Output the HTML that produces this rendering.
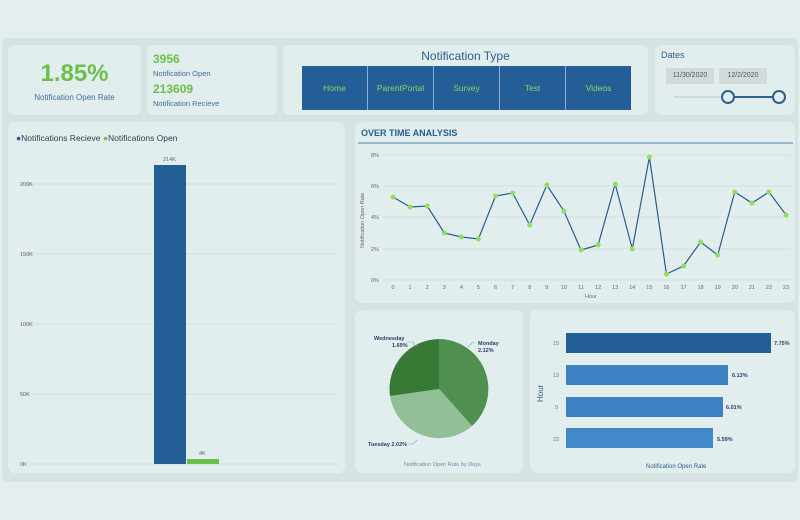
<!DOCTYPE html><html><head><style>
body{margin:0;width:800px;height:520px;background:#e4eeee;font-family:"Liberation Sans",sans-serif;position:relative;overflow:hidden}
.bg{position:absolute;left:2px;top:38px;width:796px;height:444px;background:#d6e3e3;border-radius:6px}
.c{position:absolute;background:#e2eded;border-radius:7px}
.t{position:absolute;white-space:nowrap}
</style></head><body>
<div class="bg"></div>
<div class="c" style="left:8px;top:45px;width:133px;height:70px"></div>
<div class="t" style="left:8px;width:133px;text-align:center;top:60px;font-size:24px;font-weight:bold;color:#6cbf4a">1.85%</div>
<div class="t" style="left:8px;width:133px;text-align:center;top:93px;font-size:8px;color:#3f6f9e">Notification Open Rate</div>
<div class="c" style="left:147px;top:45px;width:130px;height:70px"></div>
<div class="t" style="left:153px;top:52px;font-size:12px;font-weight:bold;color:#6cbf4a">3956</div>
<div class="t" style="left:153px;top:69px;font-size:7.5px;color:#3f6f9e">Notification Open</div>
<div class="t" style="left:153px;top:82px;font-size:12px;font-weight:bold;color:#6cbf4a">213609</div>
<div class="t" style="left:153px;top:99px;font-size:7.5px;color:#3f6f9e">Notification Recieve</div>
<div class="c" style="left:283px;top:45px;width:365px;height:70px"></div>
<div class="t" style="left:283px;width:365px;text-align:center;top:49px;font-size:12px;color:#2f5f8e">Notification Type</div>
<div style="position:absolute;left:302px;top:66px;width:329px;height:44px;background:#235f96;display:flex">
<div style="flex:1;border-right:1px solid #8fb0cc;color:#8fd15e;font-size:8.5px;display:flex;align-items:center;justify-content:center">Home</div>
<div style="flex:1;border-right:1px solid #8fb0cc;color:#8fd15e;font-size:8.5px;display:flex;align-items:center;justify-content:center">ParentPortal</div>
<div style="flex:1;border-right:1px solid #8fb0cc;color:#8fd15e;font-size:8.5px;display:flex;align-items:center;justify-content:center">Survey</div>
<div style="flex:1;border-right:1px solid #8fb0cc;color:#8fd15e;font-size:8.5px;display:flex;align-items:center;justify-content:center">Test</div>
<div style="flex:1;color:#8fd15e;font-size:8.5px;display:flex;align-items:center;justify-content:center">Videos</div></div>
<div class="c" style="left:655px;top:45px;width:140px;height:70px"></div>
<div class="t" style="left:661px;top:50px;font-size:9px;color:#2f5f8e">Dates</div>
<div class="t" style="left:666px;top:68px;width:48px;height:16px;background:#d2dada;font-size:7px;color:#556;text-align:center;line-height:16px">11/30/2020</div>
<div class="t" style="left:719px;top:68px;width:48px;height:16px;background:#d2dada;font-size:7px;color:#556;text-align:center;line-height:16px">12/2/2020</div>
<svg style="position:absolute;left:0;top:0" width="800" height="520">
<line x1="674" y1="97" x2="728" y2="97" stroke="#b9c6c6"/>
<line x1="728" y1="97" x2="779" y2="97" stroke="#2f5f8e" stroke-width="2"/>
<circle cx="728" cy="97" r="6" fill="#e2eded" stroke="#2f5f8e" stroke-width="2"/>
<circle cx="779" cy="97" r="6" fill="#e2eded" stroke="#2f5f8e" stroke-width="2"/>
</svg>
<div class="c" style="left:8px;top:122px;width:337px;height:351px"></div>
<div class="c" style="left:355px;top:122px;width:440px;height:181px"></div>
<div class="c" style="left:355px;top:310px;width:168px;height:163px"></div>
<div class="c" style="left:530px;top:310px;width:265px;height:163px"></div>
<div class="t" style="left:16px;top:133px;font-size:8.5px;color:#2b3f55"><span style="color:#235f96">●</span>Notifications Recieve <span style="color:#6cbf4a">●</span>Notifications Open</div>
<div class="t" style="left:361px;top:128px;font-size:9px;font-weight:bold;color:#2a5d8f">OVER TIME ANALYSIS</div>
<svg style="position:absolute;left:0;top:0" width="800" height="520" font-family="Liberation Sans" >
<line x1="358" y1="143" x2="793" y2="143" stroke="#7fa6c4" stroke-width="1.5"/>
<g stroke="#cfdcdc" stroke-width="0.7">
<line x1="20" y1="184" x2="335" y2="184"/><line x1="20" y1="254" x2="335" y2="254"/><line x1="20" y1="324" x2="335" y2="324"/><line x1="20" y1="394" x2="335" y2="394"/><line x1="20" y1="464" x2="335" y2="464"/>
<line x1="383" y1="155" x2="790" y2="155"/><line x1="383" y1="186" x2="790" y2="186"/><line x1="383" y1="217" x2="790" y2="217"/><line x1="383" y1="249" x2="790" y2="249"/><line x1="383" y1="280" x2="790" y2="280"/></g>
<g font-size="5.5" fill="#667">
<text x="20" y="186">200K</text><text x="20" y="256">150K</text><text x="20" y="326">100K</text><text x="20" y="396">50K</text><text x="20" y="466">0K</text>
<text x="163" y="161">214K</text><text x="199" y="455">4K</text>
<text x="371" y="157">8%</text><text x="371" y="188">6%</text><text x="371" y="219">4%</text><text x="371" y="251">2%</text><text x="371" y="282">0%</text>
<text x="585" y="298">Hour</text>
<text transform="translate(364,248) rotate(-90)">Notification Open Rate</text>
</g>
<rect x="154" y="165" width="32" height="299" fill="#235f96"/>
<rect x="187" y="459" width="32" height="5" fill="#6cbf4a"/>
<g id="xl" font-size="5.5" fill="#667" text-anchor="middle"></g>
<polyline id="ln" fill="none" stroke="#2a5d8f" stroke-width="1.2"/>
<g id="pts" fill="#8fe05a"></g>
<path d="M439,389 L439,339 A50,50 0 0 1 472,426 Z" fill="#4f8f50"/>
<path d="M439,389 L472,426 A50,50 0 0 1 390,396 Z" fill="#93bf96"/>
<path d="M439,389 L390,396 A50,50 0 0 1 439,339 Z" fill="#367a35"/>
<g font-size="5.5" fill="#2b3f6f" font-weight="bold">
<text x="374" y="340">Wednesday</text><text x="392" y="347">1.69%</text>
<text x="478" y="345">Monday</text><text x="478" y="352">2.12%</text>
<text x="368" y="446">Tuesday 2.02%</text></g>
<path d="M407,342 h7 v4 h5 M475,343 h-3 l-4,4 M408,444 h5 l4,-4" fill="none" stroke="#8aa" stroke-width="0.6"/>
<text x="404" y="466" font-size="5.5" fill="#6a8fb0">Notification Open Rate by Days</text>
<rect x="566" y="333" width="205" height="20" fill="#235f96"/>
<rect x="566" y="365" width="162" height="20" fill="#3c82c2"/>
<rect x="566" y="397" width="157" height="20" fill="#3c82c2"/>
<rect x="566" y="428" width="147" height="20" fill="#4189c8"/>
<g font-size="5.5" fill="#778"><text x="553" y="345">15</text><text x="553" y="377">13</text><text x="555" y="409">9</text><text x="553" y="441">22</text></g>
<g font-size="5.5" fill="#2b3f6f" font-weight="bold"><text x="774" y="345">7.75%</text><text x="732" y="377">6.13%</text><text x="726" y="409">6.01%</text><text x="717" y="441">5.59%</text></g>
<text transform="translate(543,402) rotate(-90)" font-size="8" fill="#2f5f8e">Hour</text>
<text x="646" y="468" font-size="6" fill="#2f5f8e">Notification Open Rate</text>
</svg>
<script>
var ys=[197,207,206,233,237,239,196,193,225,185,211,250,245,184,249,157,274,266,242,255,192,203,192,215];
var p=[],g='',t='';ys.forEach(function(y,i){var x=393+i*17.09;p.push(x.toFixed(1)+','+y);g+='<circle cx="'+x+'" cy="'+y+'" r="2.5"/>';t+='<text x="'+x+'" y="289">'+i+'</text>';});
document.getElementById('ln').setAttribute('points',p.join(' '));document.getElementById('pts').innerHTML=g;document.getElementById('xl').innerHTML=t;
</script>
</body></html>
